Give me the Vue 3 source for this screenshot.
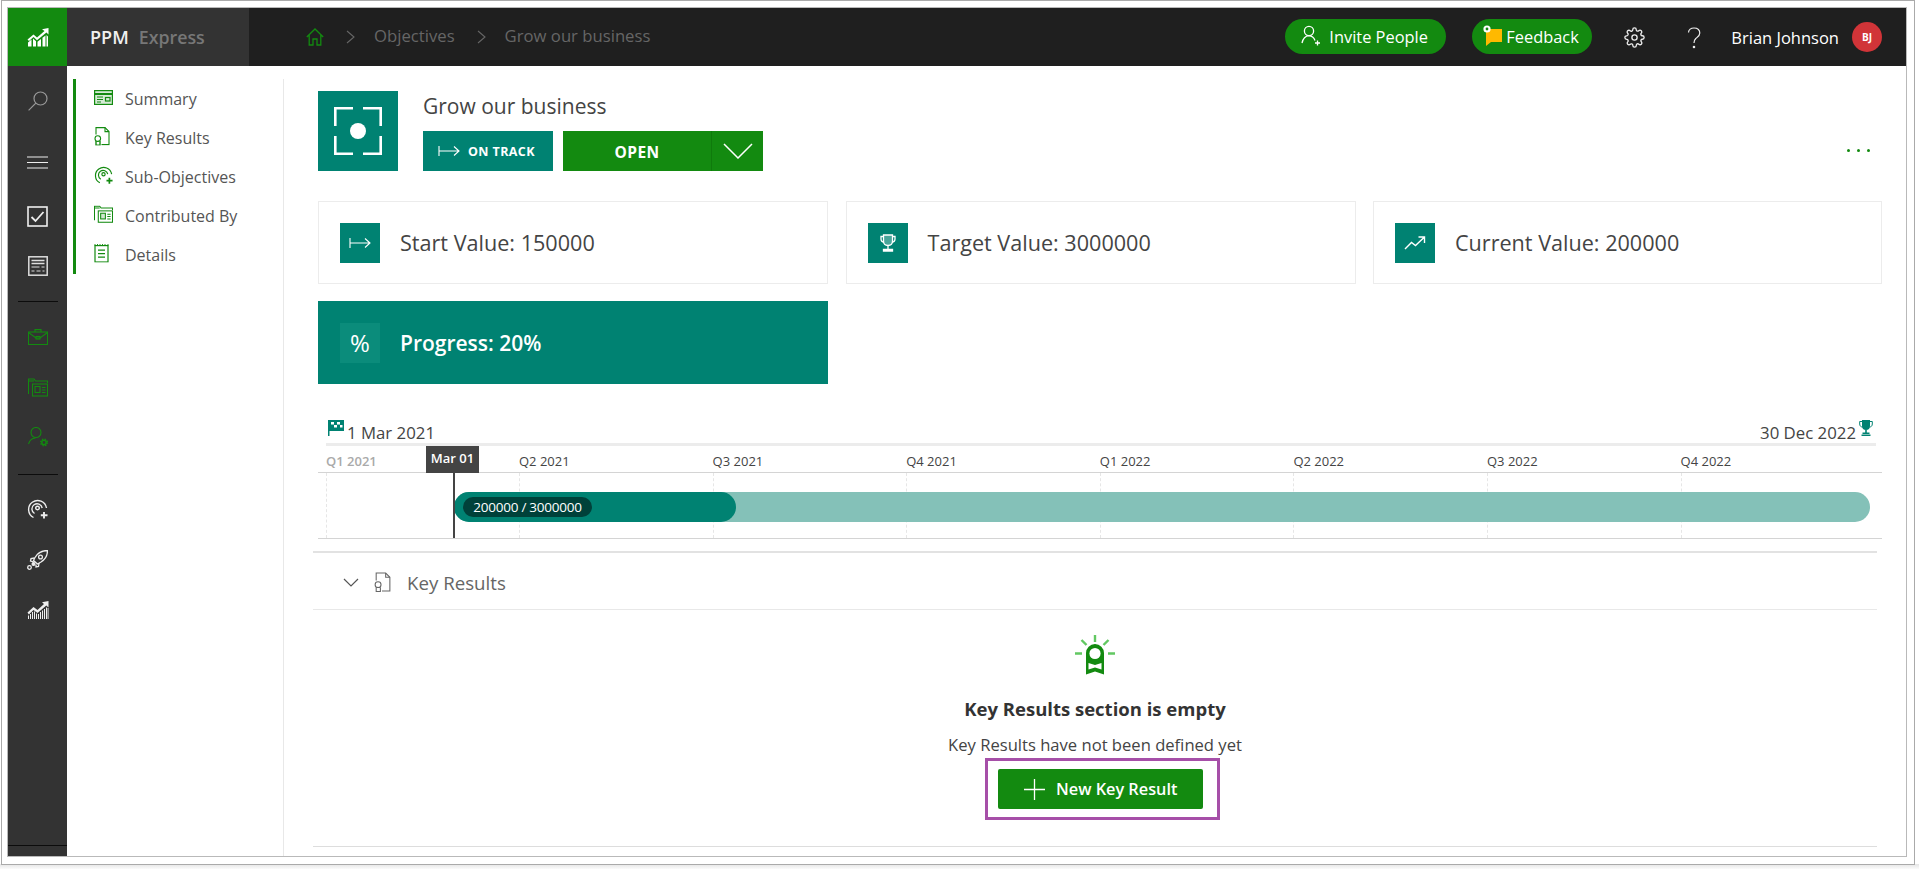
<script setup>
const navItems = [
  { label: 'Summary', icon: 'summary' },
  { label: 'Key Results', icon: 'doc' },
  { label: 'Sub-Objectives', icon: 'target' },
  { label: 'Contributed By', icon: 'folder' },
  { label: 'Details', icon: 'details' }
]
const quarters = [
  { label: 'Q1 2021', width: 193, past: true },
  { label: 'Q2 2021', width: 193.6 },
  { label: 'Q3 2021', width: 193.6 },
  { label: 'Q4 2021', width: 193.6 },
  { label: 'Q1 2022', width: 193.6 },
  { label: 'Q2 2022', width: 193.6 },
  { label: 'Q3 2022', width: 193.6 },
  { label: 'Q4 2022', width: 190 }
]
const gearPath = 'M19.4 15a1.65 1.65 0 0 0 .33 1.82l.06.06a2 2 0 0 1 0 2.83 2 2 0 0 1-2.83 0l-.06-.06a1.65 1.65 0 0 0-1.82-.33 1.65 1.65 0 0 0-1 1.51V21a2 2 0 0 1-2 2 2 2 0 0 1-2-2v-.09A1.65 1.65 0 0 0 9 19.4a1.65 1.65 0 0 0-1.82.33l-.06.06a2 2 0 0 1-2.83 0 2 2 0 0 1 0-2.83l.06-.06a1.65 1.65 0 0 0 .33-1.82 1.65 1.65 0 0 0-1.51-1H3a2 2 0 0 1-2-2 2 2 0 0 1 2-2h.09A1.65 1.65 0 0 0 4.6 9a1.65 1.65 0 0 0-.33-1.82l-.06-.06a2 2 0 0 1 0-2.83 2 2 0 0 1 2.83 0l.06.06a1.65 1.65 0 0 0 1.82.33H9a1.65 1.65 0 0 0 1-1.51V3a2 2 0 0 1 2-2 2 2 0 0 1 2 2v.09a1.65 1.65 0 0 0 1 1.51 1.65 1.65 0 0 0 1.82-.33l.06-.06a2 2 0 0 1 2.83 0 2 2 0 0 1 0 2.83l-.06.06a1.65 1.65 0 0 0-.33 1.82V9a1.65 1.65 0 0 0 1.51 1H21a2 2 0 0 1 2 2 2 2 0 0 1-2 2h-.09a1.65 1.65 0 0 0-1.51 1z'
</script>

<template>
  <div class="page">
    <div class="window">
      <div class="frame">
        <header class="topbar">
          <div class="logo">
            <svg width="22" height="19" viewBox="0 0 22 19" fill="#fff">
              <path d="M0.5 11.5 L6.5 6.5 L10 9.5 L17.5 3 L15 1.2 L21.5 0 L21.5 6.5 L19.4 4.6 L10 12.2 L6.5 9 L2 13Z"/>
              <path d="M1 18.5V14.5L4.5 11.5V18.5ZM6 18.5V10.5L9 13.2V18.5ZM10.5 18.5V13.8L14 11V18.5ZM15.5 18.5V9.8L18.5 7.4V18.5ZM19.5 18.5V7L21 8.4V18.5Z"/>
            </svg>
          </div>
          <div class="brand"><span class="brand-a">PPM</span><span class="brand-b">Express</span></div>
          <nav class="crumbs">
            <svg class="home" width="18" height="18" viewBox="0 0 18 18" fill="none" stroke="#138a10" stroke-width="1.3">
              <path d="M0.8 9 L9 1 L17.2 9 M3.2 7 V17 H7 V11 H11 V17 H14.8 V7"/>
            </svg>
            <svg class="chev" width="9" height="14" viewBox="0 0 9 14" fill="none" stroke="#666" stroke-width="1.1"><path d="M1 1 L8 7 L1 13"/></svg>
            <span class="crumb obj">Objectives</span>
            <svg class="chev" width="9" height="14" viewBox="0 0 9 14" fill="none" stroke="#666" stroke-width="1.1"><path d="M1 1 L8 7 L1 13"/></svg>
            <span class="crumb">Grow our business</span>
          </nav>
          <div class="actions">
            <button class="pill invite">
              <svg width="20" height="22" viewBox="0 0 20 22" fill="none" stroke="#fff" stroke-width="1.3">
                <circle cx="8" cy="6" r="4.6"/><path d="M1 18 C2 13.5 5 11 8 10.7 C11 11 13 13 14 15.5"/><path d="M16.5 15.5V20.5M14 18H19"/>
              </svg>
              <span>Invite People</span>
            </button>
            <button class="pill feedback">
              <svg width="20" height="22" viewBox="0 0 20 22">
                <path d="M3 4 H19 V17 H8 L3 21Z" fill="#ffb900"/>
                <circle cx="4" cy="4" r="3.6" fill="#fff"/><circle cx="4" cy="4" r="1.4" fill="#138a10"/>
              </svg>
              <span>Feedback</span>
            </button>
            <svg class="gear" width="21" height="21" viewBox="0 0 24 24" fill="none" stroke="#eee" stroke-width="1.5">
              <circle cx="12" cy="12" r="3"/><path :d="gearPath"/>
            </svg>
            <svg class="help" width="14" height="22" viewBox="0 0 14 22" fill="none" stroke="#eee" stroke-width="1.2">
              <path d="M1.5 5.5 C1.5 2.5 4 1 7 1 C10.5 1 12.8 3 12.8 6 C12.8 9 10.5 10 8.8 11.5 C7.4 12.8 7 14 7 16"/>
              <circle cx="7" cy="20" r="0.7" fill="#eee"/>
            </svg>
            <span class="user">Brian Johnson</span>
            <span class="avatar">BJ</span>
          </div>
        </header>

        <div class="body">
          <aside class="rail">
            <svg class="r1" width="20" height="20" viewBox="0 0 20 20" fill="none" stroke="#999" stroke-width="1.2"><circle cx="12.5" cy="7.5" r="6.5"/><path d="M7.8 12.2 L0.6 19.4"/></svg>
            <svg class="r2" width="21" height="13" viewBox="0 0 21 13" fill="none" stroke="#eee" stroke-width="1.1"><path d="M0 1H21M0 6.5H21M0 12H21"/></svg>
            <svg class="r3" width="21" height="21" viewBox="0 0 21 21" fill="none" stroke="#eee"><rect x="1" y="1" width="19" height="19" stroke-width="1.6"/><path d="M4.5 11 L8.5 15 L16.5 6" stroke-width="1.8"/></svg>
            <svg class="r4" width="20" height="20" viewBox="0 0 20 20" fill="none" stroke="#ddd"><rect x="0.8" y="0.8" width="18.4" height="18.4" stroke-width="1.5"/><path d="M3.5 4.5H16.5M3.5 7.5H16.5" stroke-width="1.7"/><path d="M3.5 11H11.5M13.5 11H16.5M3.5 15H6.5M8.5 15H12.5M14.5 15H16.5" stroke-width="1.2"/></svg>
            <div class="rail-div d1"></div>
            <svg class="r5" width="20" height="16" viewBox="0 0 20 16" fill="none" stroke="#138a10" stroke-width="1.1"><rect x="0.5" y="3" width="19" height="12.5"/><path d="M7 3V0.6H13V3M0.5 3.5 L8 9 H12 L19.5 3.5"/><rect x="8" y="7.5" width="4" height="2.5"/></svg>
            <svg class="r6" width="20" height="19" viewBox="0 0 20 19" fill="none" stroke="#138a10" stroke-width="1.1"><path d="M0.5 16V1H6L7.5 3H19.5V5"/><path d="M0.5 3H6"/><rect x="4.5" y="6" width="15" height="12"/><rect x="7" y="8.5" width="5" height="6"/><path d="M14 9.5H17.5M14 12H17.5M14 14.5H17.5"/></svg>
            <svg class="r7" width="20" height="20" viewBox="0 0 20 20" fill="none" stroke="#138a10" stroke-width="1.1"><circle cx="8" cy="5.5" r="5"/><path d="M0.5 17 C1.5 13.5 4 11.2 7.5 11"/><circle cx="16" cy="15.5" r="2.2" stroke-width="1.5"/><circle cx="16" cy="15.5" r="3.4" stroke-width="1.3" stroke-dasharray="1.4 1.3"/></svg>
            <div class="rail-div d2"></div>
            <svg class="r8" width="21" height="20" viewBox="0 0 21 20" fill="none" stroke="#eee" stroke-width="1.4">
              <path d="M6.5 18.5 A9 9 0 1 1 19.5 9"/><path d="M7.5 14.5 A5.2 5.2 0 1 1 15.2 9"/><circle cx="10.5" cy="9" r="1.8"/><path d="M17 13V19.5M13.8 16.2H20.5" stroke-width="1.9"/>
            </svg>
            <svg class="r9" width="21" height="20" viewBox="0 0 21 20" fill="none" stroke="#eee" stroke-width="1.3">
              <path d="M20.5 0.5 C15 0.5 10.5 3 8 7.5 L6.5 10.5 L10.5 14 L14 12 C18 9.5 20.5 6 20.5 0.5Z"/>
              <circle cx="13.5" cy="7" r="1.9"/>
              <path d="M7.5 8 L4 8.5 L3.5 11 L7 12 M9 14.5 L9 17 L11.5 16.5 L12 13" />
              <circle cx="2.5" cy="17.5" r="1.8" /><circle cx="6.5" cy="14" r="1.4" fill="#eee"/>
            </svg>
            <svg class="r10" width="22" height="18" viewBox="0 0 22 18" fill="#eee">
              <path d="M0.5 11.5 L6.5 6 L10.5 9 L17 3 L15 1.3 L21.5 0 L21.5 6.5 L19.3 4.6 L10.5 12 L6.5 9 L1.8 13.5Z"/>
              <path d="M1 18V14.5H2V18ZM3 18V13H4V18ZM5 18V11H6V18ZM7 18V10.5H8V18ZM9 18V12.5H10V18ZM11 18V13H12V18ZM13 18V11H14V18ZM15 18V9.5H16V18ZM17 18V8H18V18ZM19 18V6.5H20V18ZM20.6 18V7H21.5V18Z"/>
            </svg>
            <div class="rail-foot"></div>
          </aside>

          <nav class="subnav">
            <ul class="subnav-list">
              <li v-for="item in navItems" :key="item.label" class="subnav-item">
                <svg v-if="item.icon === 'summary'" width="19" height="15" viewBox="0 0 19 15" fill="none" stroke="#138a10" stroke-width="1.2"><rect x="0.6" y="0.6" width="17.8" height="13.8" fill="#d6ebd6"/><path d="M0.6 4H18.4" stroke-width="2"/><path d="M3 7H9M3 9.5H9M3 12H7" /><rect x="11.5" y="7.5" width="4.5" height="3.5"/></svg>
                <svg v-else-if="item.icon === 'doc'" width="16" height="19" viewBox="0 0 16 19" fill="none" stroke="#138a10" stroke-width="1.1"><path d="M2 8V1H11L15 5V18H7.5"/><path d="M11 1V5H15"/><circle cx="3.8" cy="12" r="2.8"/><path d="M2 14.5V18.5H6V14.5" stroke-width="1.4"/></svg>
                <svg v-else-if="item.icon === 'target'" width="19" height="19" viewBox="0 0 21 20" fill="none" stroke="#138a10" stroke-width="1.3"><path d="M6.5 18.5 A9 9 0 1 1 19.5 9"/><path d="M7.5 14.5 A5.2 5.2 0 1 1 15.2 9"/><circle cx="10.5" cy="9" r="1.8"/><path d="M17 13V19.5M13.8 16.2H20.5" stroke-width="1.9"/></svg>
                <svg v-else-if="item.icon === 'folder'" width="19" height="18" viewBox="0 0 20 19" fill="none" stroke="#138a10" stroke-width="1.1"><path d="M0.5 16V1H6L7.5 3H19.5V5"/><path d="M0.5 3H6"/><rect x="4.5" y="6" width="15" height="12"/><rect x="7" y="8.5" width="5" height="6" fill="#cfe6cf"/><path d="M14 9.5H17.5M14 12H17.5M14 14.5H17.5"/></svg>
                <svg v-else width="15" height="19" viewBox="0 0 15 19" fill="none" stroke="#138a10" stroke-width="1.2"><rect x="1" y="2" width="13" height="16.4"/><path d="M1 0.5V2M3.5 0.5V2M6 0.5V2M8.5 0.5V2M11 0.5V2M14 0.5V2" stroke-width="1"/><path d="M4 6.5H11M4 10H11M4 13.5H11"/></svg>
                <span>{{ item.label }}</span>
              </li>
            </ul>
          </nav>

          <main class="main">
            <section class="obj-head">
              <div class="obj-icon">
                <svg width="48" height="48" viewBox="0 0 48 48" fill="none" stroke="#fff" stroke-width="2.6">
                  <path d="M1.3 19 V1.3 H19 M29 1.3 H46.7 V19 M46.7 29 V46.7 H29 M19 46.7 H1.3 V29"/>
                  <circle cx="24" cy="24" r="8" fill="#fff" stroke="none"/>
                </svg>
              </div>
              <div class="obj-info">
                <div class="obj-title">Grow our business</div>
                <div class="obj-tags">
                  <div class="tag-track">
                    <svg width="22" height="12" viewBox="0 0 22 12" fill="none" stroke="#fff" stroke-width="1.1"><path d="M1 1V11M1 6H21M16 1.5 L21 6 L16 10.5"/></svg>
                    <span>ON TRACK</span>
                  </div>
                  <div class="tag-open">
                    <span class="open-label">OPEN</span>
                    <span class="open-arrow"><svg width="30" height="16" viewBox="0 0 30 16" fill="none" stroke="#fff" stroke-width="1.5"><path d="M1 1 L15 15 L29 1"/></svg></span>
                  </div>
                </div>
              </div>
              <div class="dots"><i></i><i></i><i></i></div>
            </section>

            <section class="cards">
              <div class="card">
                <span class="card-icon"><svg width="22" height="12" viewBox="0 0 22 12" fill="none" stroke="#fff" stroke-width="1.1"><path d="M1 1V11M1 6H21M16 1.5 L21 6 L16 10.5"/></svg></span>
                <span>Start Value: 150000</span>
              </div>
              <div class="card">
                <span class="card-icon"><svg width="16" height="18" viewBox="0 0 16 18" fill="none" stroke="#fff" stroke-width="1.3"><path d="M3.5 1H12.5V7C12.5 10 10.5 11.5 8 11.5C5.5 11.5 3.5 10 3.5 7Z" fill="#cfe8e4" fill-opacity="0.35"/><path d="M3.5 2.5H1V5C1 7 2.5 8 4 8M12.5 2.5H15V5C15 7 13.5 8 12 8M8 11.5V15"/><path d="M3.5 15.5H12.5V17H3.5Z" fill="#fff"/></svg></span>
                <span>Target Value: 3000000</span>
              </div>
              <div class="card">
                <span class="card-icon"><svg width="22" height="14" viewBox="0 0 22 14" fill="none" stroke="#fff" stroke-width="1.4"><path d="M1 13 L7.5 6.5 L11.5 9.5 L20 1.5M14.5 1 H20.5 V7"/></svg></span>
                <span>Current Value: 200000</span>
              </div>
              <div class="card card-strong">
                <span class="card-icon icon-soft">%</span>
                <span>Progress: 20%</span>
              </div>
            </section>

            <section class="timeline">
              <div class="tl-dates">
                <div class="tl-date start">
                  <svg width="16" height="16" viewBox="0 0 16 16" fill="#008272"><path d="M0 0H16V11H1.5V16H0Z"/><path d="M3 2H6V4.5H3ZM9 2H12V4.5H9ZM6 5H9V7.5H6ZM12 5H14.5V7.5H12Z" fill="#fff"/></svg>
                  <span>1 Mar 2021</span>
                </div>
                <div class="tl-date end">
                  <span>30 Dec 2022</span>
                  <svg width="14" height="16" viewBox="0 0 14 16" fill="#008272"><path d="M3 0H11V6C11 8.5 9.5 10 7 10C4.5 10 3 8.5 3 6Z"/><path d="M3 1.5H0.7V4C0.7 6 2 7 3.5 7M11 1.5H13.3V4C13.3 6 12 7 10.5 7" fill="none" stroke="#008272"/><path d="M6.2 10H7.8V12.5H6.2ZM3.5 12.5H10.5V14H3.5ZM2.5 14.5H11.5V16H2.5Z"/></svg>
                </div>
              </div>
              <div class="tl-scale">
                <span v-for="q in quarters" :key="q.label" class="tl-q" :class="{ past: q.past }" :style="{ width: q.width + 'px' }">{{ q.label }}</span>
                <span class="tl-today">Mar 01</span>
              </div>
              <div class="tl-track">
                <i v-for="q in quarters" :key="q.label" class="tl-cell" :style="{ width: q.width + 'px' }"></i>
                <div class="tl-marker"></div>
                <div class="tl-bar">
                  <div class="tl-fill"><span class="tl-pill">200000 / 3000000</span></div>
                </div>
              </div>
            </section>

            <section class="kr">
              <div class="kr-head">
                <svg width="16" height="9" viewBox="0 0 16 9" fill="none" stroke="#555" stroke-width="1.2"><path d="M1 1 L8 8 L15 1"/></svg>
                <svg width="17" height="20" viewBox="0 0 16 19" fill="none" stroke="#666" stroke-width="1"><path d="M2 8V1H11L15 5V18H7.5"/><path d="M11 1V5H15"/><circle cx="3.8" cy="12" r="2.8"/><path d="M2 14.5V18.5H6V14.5"/></svg>
                <span>Key Results</span>
              </div>
              <div class="kr-empty">
                <svg class="kr-icon" width="40" height="40" viewBox="0 0 40 40" fill="none">
                  <path d="M20 0V7M6.5 5 L11.5 10M33.5 5 L28.5 10M0 18.5H7M33 18.5H40" stroke="#62c862" stroke-width="2.4"/>
                  <path d="M11 39.5V18 A9 9 0 0 1 29 18V39.5L20 36.5Z" fill="#138a10"/>
                  <circle cx="20" cy="18.5" r="5.6" fill="#fff"/>
                  <path d="M13.5 28 L20 30 L26.5 28 V34.5 L20 32.5 L13.5 34.5Z" fill="#fff"/>
                </svg>
                <div class="kr-title">Key Results section is empty</div>
                <div class="kr-sub">Key Results have not been defined yet</div>
                <div class="callout">
                  <button class="new-btn">
                    <svg width="21" height="21" viewBox="0 0 21 21" fill="none" stroke="#fff" stroke-width="1.3"><path d="M10.5 0V21M0 10.5H21"/></svg>
                    <span>New Key Result</span>
                  </button>
                </div>
              </div>
            </section>
          </main>
        </div>
      </div>
    </div>
  </div>
</template>

<style>
html, body { margin: 0; background: #fff; overflow: hidden; }
</style>

<style scoped>
* { box-sizing: border-box; }
.page {
  width: 1919px; height: 869px; padding-left: 1px; overflow: hidden;
  font-family: "Open Sans", "Noto Sans", sans-serif; background: linear-gradient(#fff 864px, #e4e4e4 864px, #fbfbfb 869px);
}
.window {
  width: 1914px; height: 865px; border: 1px solid #aaa; background: #fff;
  padding: 6px 7px 7px 5px;
}
.frame {
  width: 1900px; height: 850px; border: 1px solid #b9b9b9; display: flex; flex-direction: column; overflow: hidden;
}
.topbar { height: 58px; flex: none; background: #1f1f1f; display: flex; align-items: stretch; }
.logo { width: 59px; background: #138a10; display: flex; align-items: center; justify-content: center; }
.brand { width: 182px; background: #333; display: flex; align-items: center; padding: 0 0 0 23px; font-size: 18px; font-weight: 600; }
.brand-a { color: #f0f0f0; margin-right: 10px; }
.brand-b { color: #777; font-size: 17.8px; }
.crumbs { display: flex; align-items: center; padding-left: 57px; color: #666; font-size: 16.7px; }
.crumb { margin-bottom: 3px; }
.chev { margin: 0 19px 0 22px; }
.actions { margin-left: auto; display: flex; align-items: center; color: #fff; }
.pill {
  height: 35px; border: 0; border-radius: 18px; background: #138a10; color: #fff; display: flex; align-items: center; font: inherit; font-size: 16.4px; padding: 0; position: relative; top: -1px;
}
.invite { width: 161px; padding-left: 16px; gap: 8px; }
.feedback { width: 120px; margin-left: 26px; padding-left: 11px; gap: 3px; }
.gear { margin-left: 32px; }
.help { margin-left: 42px; margin-top: 2px; }
.user { margin-left: 30px; font-size: 16.5px; }
.avatar { width: 30px; height: 30px; border-radius: 50%; background: #d13438; margin: 0 24px 0 13px; font-size: 10px; font-weight: 700; display: flex; align-items: center; justify-content: center; }

.body { flex: 1; display: flex; min-height: 0; }
.rail { width: 59px; flex: none; background: #333; display: flex; flex-direction: column; align-items: center; position: relative; }
.rail svg { flex: none; }
.r1 { margin-top: 25px; }
.r2 { margin-top: 45px; }
.r3 { margin-top: 37px; }
.r4 { margin-top: 29px; }
.rail-div { width: 40px; height: 1px; background: #0c0c0c; flex: none; }
.d1 { margin-top: 25px; }
.r5 { margin-top: 27px; }
.r6 { margin-top: 33px; }
.r7 { margin-top: 30px; }
.d2 { margin-top: 27px; }
.r8 { margin-top: 24px; }
.r9 { margin-top: 31px; }
.r10 { margin-top: 31px; }
.rail-foot { position: absolute; left: 0; right: 0; bottom: 10px; height: 1px; background: #0c0c0c; }

.subnav { width: 217px; flex: none; border-right: 1px solid #e8e8e8; margin-top: 13px; padding-left: 6px; }
.subnav-list { list-style: none; margin: 0; padding: 0 0 0 18px; border-left: 3px solid #138a10; height: 195px; margin-right: 0; }
.subnav-item { height: 39px; display: flex; align-items: center; font-size: 16px; color: #555; position: relative; padding-left: 31px; }
.subnav-item svg { position: absolute; left: 0; top: 50%; transform: translateY(-60%); }

.main { flex: 1; min-width: 0; padding: 25px 25px 0 34px; }
.obj-head { display: flex; height: 80px; position: relative; }
.obj-icon { width: 80px; height: 80px; background: #008272; display: flex; align-items: center; justify-content: center; }
.obj-info { margin-left: 25px; display: flex; flex-direction: column; justify-content: space-between; }
.obj-title { font-size: 21px; line-height: 30px; color: #444; }
.obj-tags { display: flex; gap: 10px; }
.tag-track { width: 130px; height: 40px; background: #008272; color: #fff; display: flex; align-items: center; padding-left: 15px; gap: 8px; font-size: 12.5px; font-weight: 700; letter-spacing: 0.4px; }
.tag-open { width: 200px; height: 40px; background: #138a10; color: #fff; display: flex; }
.open-label { width: 149px; text-align: center; font-size: 15.5px; line-height: 42px; font-weight: 700; letter-spacing: 0.4px; border-right: 1px solid #0f7a0c; }
.open-arrow { flex: 1; display: flex; align-items: center; justify-content: center; }
.dots { position: absolute; right: 11px; top: 58px; display: flex; gap: 7px; }
.dots i { width: 3px; height: 3px; border-radius: 50%; background: #138a10; }

.cards { margin-top: 30px; display: grid; grid-template-columns: 510px 510px 509px; column-gap: 17.5px; row-gap: 17px; }
.card { height: 83px; border: 1px solid #ececec; display: flex; align-items: center; padding-left: 21px; gap: 20px; font-size: 21.6px; color: #444; }
.card-icon { width: 40px; height: 40px; background: #008272; color: #fff; display: flex; align-items: center; justify-content: center; flex: none; }
.card-strong { background: #008272; border-color: #008272; color: #fff; font-weight: 600; font-size: 21px; }
.icon-soft { background: #0b8c7b; font-size: 24px; font-weight: 400; }

.timeline { margin-top: 30px; width: 1564px; }
.tl-dates { height: 32px; margin: 0 6px 0 8px; border-bottom: 3px solid #ececec; display: flex; justify-content: space-between; font-size: 16.8px; color: #444; }
.tl-date { display: flex; align-items: flex-start; gap: 3px; line-height: 22px; padding-top: 8px; }
.tl-date.start { padding-left: 2px; }
.tl-date.end { padding-right: 3px; }
.tl-date svg { margin-top: -2px; }
.tl-scale { height: 27px; padding: 3px 0 0 8px; display: flex; align-items: center; position: relative; border-bottom: 1px solid #d4d4d4; font-size: 13px; color: #444; }
.tl-q { flex: none; font-weight: 500; }
.tl-q.past { color: #aaa; font-weight: 600; }
.tl-today { position: absolute; left: 108px; top: 0; width: 53px; height: 27px; background: #444; color: #fff; font-weight: 600; text-align: center; line-height: 25px; }
.tl-track { height: 66px; border-bottom: 1px solid #d4d4d4; padding-left: 8px; display: flex; position: relative; }
.tl-cell { flex: none; border-left: 1px dashed #e6e6e6; }
.tl-marker { position: absolute; left: 135px; top: 0; bottom: 0; width: 2px; background: #444; z-index: 2; }
.tl-bar { position: absolute; left: 136px; top: 19px; width: 1416px; height: 30px; background: #84c1b8; border-radius: 15px; }
.tl-fill { width: 282px; height: 30px; background: #008272; border-radius: 15px; padding: 5px 0 0 9px; }
.tl-pill { display: block; width: 129px; height: 20px; border-radius: 10px; background: #00413a; color: #fff; font-size: 13.5px; line-height: 20px; text-align: center; letter-spacing: -0.25px; }

.kr { margin: 12px 4px 0 -5px; border-top: 2px solid #e2e2e2; }
.kr-head { height: 57px; border-bottom: 1px solid #e8e8e8; display: flex; align-items: center; padding: 2px 0 0 30px; font-size: 18.7px; color: #666; }
.kr-head svg:first-child { margin-right: 15px; }
.kr-head span { margin-left: 16px; }
.kr-empty { height: 237px; border-bottom: 1px solid #ddd; display: flex; flex-direction: column; align-items: center; padding-top: 25px; color: #444; }
.kr-title { margin-top: 22px; font-size: 18.5px; line-height: 24px; font-weight: 700; color: #333; }
.kr-sub { margin-top: 12px; font-size: 16.6px; line-height: 24px; }
.callout { margin: 1px 0 0 15px; width: 235px; height: 62px; border: 3px solid #a64fa8; display: flex; align-items: center; justify-content: flex-start; padding-left: 10px; }
.new-btn { width: 205px; height: 40px; background: #138a10; color: #fff; border: 0; border-radius: 2px; display: flex; align-items: center; padding-left: 26px; gap: 11px; font: inherit; font-size: 16.3px; font-weight: 600; }
</style>
